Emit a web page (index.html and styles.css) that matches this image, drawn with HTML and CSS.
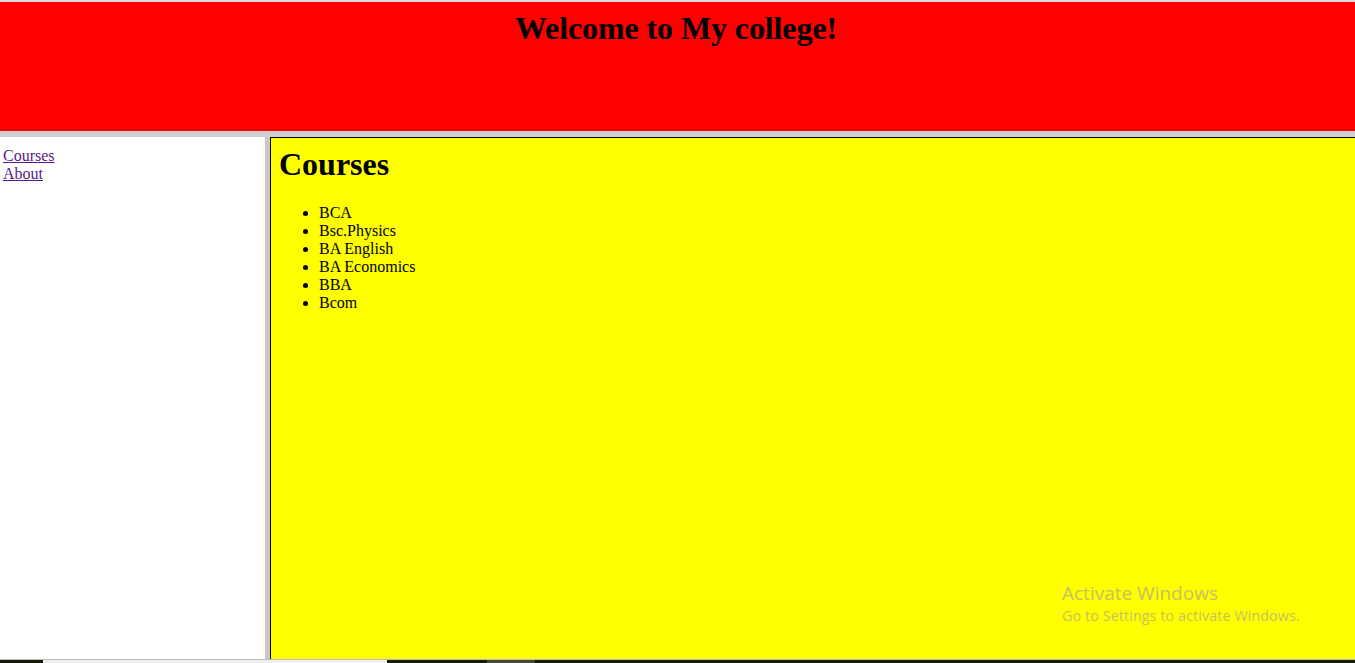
FILE: index.html
```html
<!DOCTYPE html>
<html lang="en">
<head>
<meta charset="utf-8">
<title>My college</title>
<link rel="stylesheet" href="styles.css">
</head>
<body>
<div class="screen">
  <div class="top-line"></div>
  <header class="header">
    <h1 class="welcome">Welcome to My college!</h1>
  </header>
  <div class="divider"></div>
  <div class="main">
    <nav class="nav-frame">
      <a href="#courses" class="nav-link">Courses</a><br>
      <a href="#about" class="nav-link">About</a>
    </nav>
    <div class="splitter"></div>
    <section class="content-frame">
      <h1 class="content-title">Courses</h1>
      <ul class="course-list">
        <li>BCA</li>
        <li>Bsc.Physics</li>
        <li>BA English</li>
        <li>BA Economics</li>
        <li>BBA</li>
        <li>Bcom</li>
      </ul>
      <div class="watermark">
        <div class="wm-title">Activate Windows</div>
        <div class="wm-sub">Go to Settings to activate Windows.</div>
      </div>
    </section>
  </div>
  <div class="bottom-line"></div>
  <div class="taskbar">
    <div class="tb-dark tb-a"></div>
    <div class="tb-light"></div>
    <div class="tb-dark tb-b"></div>
    <div class="tb-gray"></div>
    <div class="tb-dark tb-c"></div>
  </div>
</div>
</body>
</html>
```

FILE: styles.css
```css
html, body {
  margin: 0;
  padding: 0;
  height: 100%;
  overflow: hidden;
}

body {
  font-family: "Liberation Serif", "Times New Roman", serif;
  font-size: 16px;
  color: #000;
  background: #fff;
}

.screen {
  display: flex;
  flex-direction: column;
  width: 1355px;
  height: 663px;
}

.top-line {
  height: 2px;
  background: #dcdcdc;
}

.header {
  height: 129px;
  background: #ff0000;
  padding-top: 8px;
  box-sizing: border-box;
}

.welcome {
  margin: 0;
  font-size: 32px;
  font-weight: bold;
  text-align: center;
  letter-spacing: -0.1px;
  padding-right: 3px;
}

.divider {
  height: 6px;
  background: #cfcfcf;
}

.main {
  display: flex;
  height: 522px;
}

.nav-frame {
  width: 265px;
  background: #fff;
  padding: 10px 0 0 3px;
  box-sizing: border-box;
  line-height: 18px;
}

.nav-link {
  color: #551a8b;
  text-decoration: underline;
}

.splitter {
  width: 5px;
  background: #c8c8c8;
}

.content-frame {
  position: relative;
  flex: 1;
  background: #ffff00;
  border-top: 1px solid #000;
  border-left: 1px solid #000;
  padding: 8px;
  box-sizing: border-box;
}

.content-title {
  margin: 0 0 21px 0;
  font-size: 32px;
  font-weight: bold;
}

.course-list {
  margin: 0;
  padding-left: 40px;
  line-height: 18px;
}

.watermark {
  position: absolute;
  left: 791px;
  top: 442px;
  font-family: "Open Sans", "Noto Sans", sans-serif;
  color: #c6c062;
}

.wm-title {
  font-size: 19px;
  line-height: 26px;
}

.wm-sub {
  font-size: 14.3px;
  line-height: 20px;
  letter-spacing: 0.1px;
}

.bottom-line {
  height: 1px;
  background: #bdbdbd;
}

.taskbar {
  display: flex;
  height: 3px;
  background: #151a05;
}

.tb-a { width: 43px; }
.tb-light { width: 344px; background: #f0f0f0; }
.tb-b { width: 100px; }
.tb-gray { width: 48px; background: #44463a; }
.tb-c { flex: 1; }
```
